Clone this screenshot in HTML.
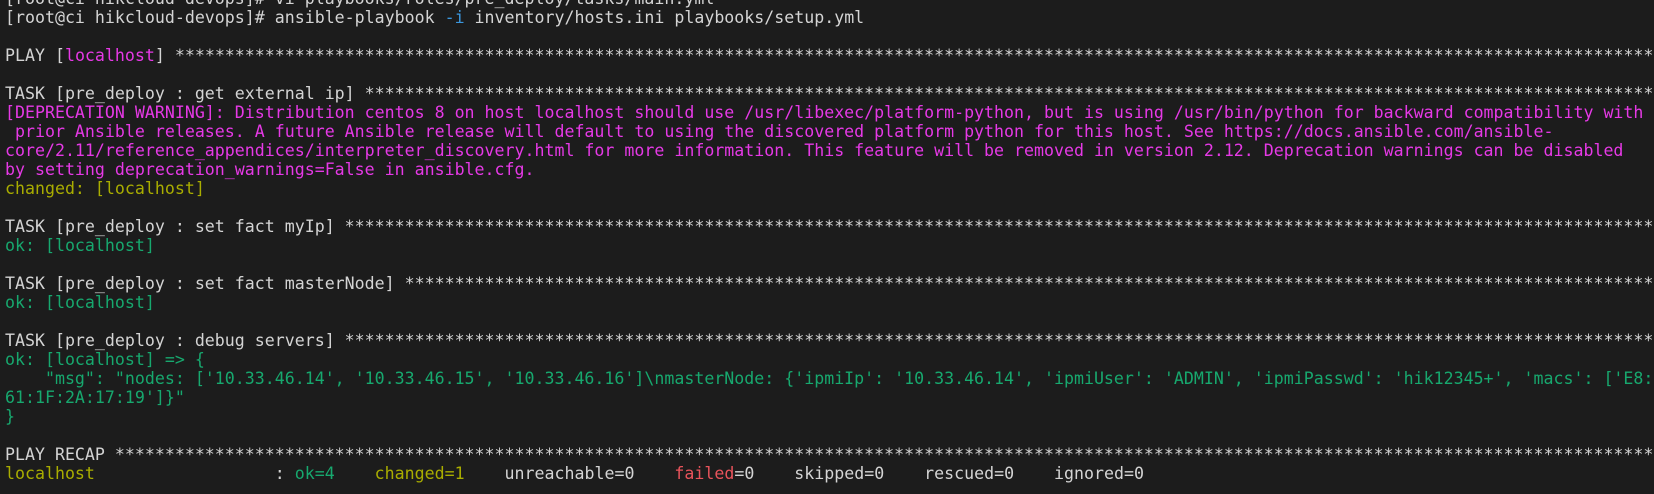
<!DOCTYPE html>
<html><head><meta charset="utf-8"><style>
html,body{margin:0;padding:0;background:#1c1c1c;width:1654px;height:494px;overflow:hidden;position:relative}
pre{margin:0;position:absolute;left:5px;top:-11px;width:1649px;height:505px;overflow:hidden;font-family:"DejaVu Sans Mono","Liberation Mono",monospace;font-size:16.6px;line-height:19px;color:#d4d4d4;white-space:pre}
.m{color:#e639e6}.g{color:#17a86e}.y{color:#a9ad00}.r{color:#e8535b}.c{color:#3a96dd}
</style></head><body><pre>[root@ci hikcloud-devops]# vi playbooks/roles/pre_deploy/tasks/main.yml
[root@ci hikcloud-devops]# ansible-playbook <span class="c">-i</span> inventory/hosts.ini playbooks/setup.yml

PLAY [<span class="m">localhost</span>] ******************************************************************************************************************************************************************

TASK [pre_deploy : get external ip] ****************************************************************************************************************************************
<span class="m">[DEPRECATION WARNING]: Distribution centos 8 on host localhost should use /usr/libexec/platform-python, but is using /usr/bin/python for backward compatibility with
 prior Ansible releases. A future Ansible release will default to using the discovered platform python for this host. See https://docs.ansible.com/ansible-
core/2.11/reference_appendices/interpreter_discovery.html for more information. This feature will be removed in version 2.12. Deprecation warnings can be disabled
by setting deprecation_warnings=False in ansible.cfg.</span>
<span class="y">changed: [localhost]</span>

TASK [pre_deploy : set fact myIp] ******************************************************************************************************************************************
<span class="g">ok: [localhost]</span>

TASK [pre_deploy : set fact masterNode] ************************************************************************************************************************************
<span class="g">ok: [localhost]</span>

TASK [pre_deploy : debug servers] ******************************************************************************************************************************************
<span class="g">ok: [localhost] =&gt; {
    "msg": "nodes: ['10.33.46.14', '10.33.46.15', '10.33.46.16']\nmasterNode: {'ipmiIp': '10.33.46.14', 'ipmiUser': 'ADMIN', 'ipmiPasswd': 'hik12345+', 'macs': ['E8:
61:1F:2A:17:19']}"
}</span>

PLAY RECAP *****************************************************************************************************************************************************************
<span class="y">localhost</span>                  : <span class="g">ok=4</span>    <span class="y">changed=1</span>    unreachable=0    <span class="r">failed</span>=0    skipped=0    rescued=0    ignored=0
</pre></body></html>
